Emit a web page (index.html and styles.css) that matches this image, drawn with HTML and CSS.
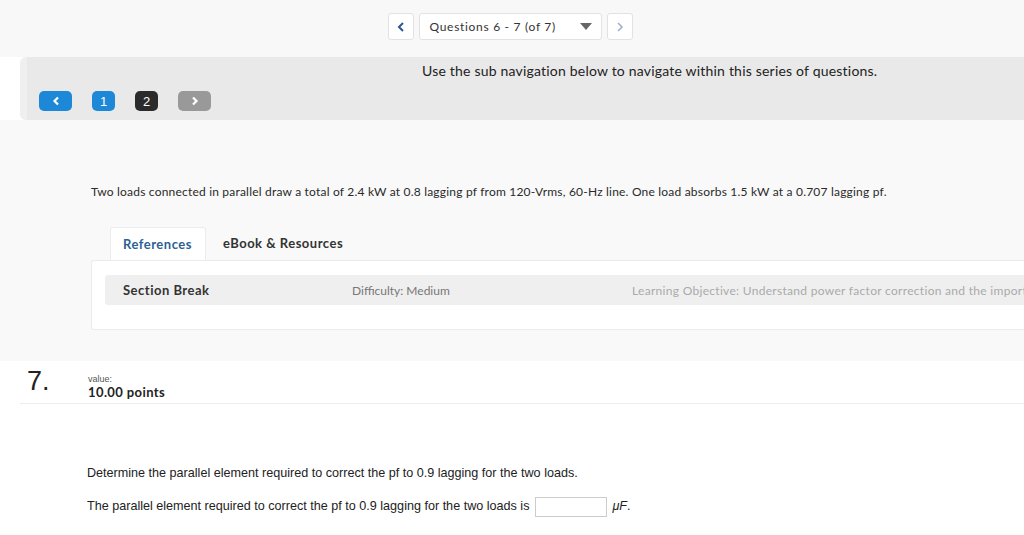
FILE: index.html
```html
<!DOCTYPE html>
<html lang="en">
<head>
  <meta charset="UTF-8" />
  <meta name="viewport" content="width=device-width, initial-scale=1" />
  <title>Questions 6 - 7 (of 7)</title>
  <link rel="stylesheet" href="styles.css">
</head>
<body>
  <header class="topbar">
    <button class="nav-btn">
      <svg width="8" height="10" viewBox="0 0 8 10"><path d="M6 1 L2 5 L6 9" fill="none" stroke="#2a5a94" stroke-width="2"/></svg>
    </button>
    <div class="picker">
      <span>Questions 6 - 7 (of 7)</span>
      <svg width="12" height="7" viewBox="0 0 12 7"><path d="M0 0 H12 L6 7 Z" fill="#666"/></svg>
    </div>
    <button class="nav-btn">
      <svg width="8" height="10" viewBox="0 0 8 10"><path d="M2 1 L6 5 L2 9" fill="none" stroke="#9bb3cf" stroke-width="1.6"/></svg>
    </button>
  </header>

  <section class="subnav">
    <div class="subnav-edge"></div>
    <div class="subnav-body">
      <p class="subnav-note">Use the sub navigation below to navigate within this series of questions.</p>
      <div class="pager">
        <span class="pg pg-arrow pg-blue">
          <svg width="8" height="10" viewBox="0 0 8 10"><path d="M6 1.5 L2.5 5 L6 8.5" fill="none" stroke="#fff" stroke-width="2.2"/></svg>
        </span>
        <span class="pg pg-blue">1</span>
        <span class="pg pg-dark">2</span>
        <span class="pg pg-arrow pg-gray">
          <svg width="8" height="10" viewBox="0 0 8 10"><path d="M2 1.5 L5.5 5 L2 8.5" fill="none" stroke="#fff" stroke-width="2.2"/></svg>
        </span>
      </div>
    </div>
  </section>

  <section class="stem">
    <p class="stem-text">Two loads connected in parallel draw a total of 2.4 kW at 0.8 lagging pf from 120-Vrms, 60-Hz line. One load absorbs 1.5 kW at a 0.707 lagging pf.</p>
    <div class="tabs">
      <span class="tab tab-active">References</span>
      <span class="tab">eBook &amp; Resources</span>
    </div>
    <div class="panel">
      <div class="meta-row">
        <span class="meta-title">Section Break</span>
        <span class="meta-diff">Difficulty: Medium</span>
        <span class="meta-obj">Learning Objective: Understand power factor correction and the importance of power factor.</span>
      </div>
    </div>
  </section>

  <section class="item">
    <div class="item-head">
      <span class="item-num">7.</span>
      <div class="item-value">
        <span class="value-label">value:</span>
        <span class="value-points">10.00 points</span>
      </div>
    </div>
    <div class="item-body">
      <p>Determine the parallel element required to correct the pf to 0.9 lagging for the two loads.</p>
      <p>The parallel element required to correct the pf to 0.9 lagging for the two loads is <input class="answer" type="text"> <i>μF</i>.</p>
    </div>
  </section>
</body>
</html>
```

FILE: styles.css
```css
body { margin: 0; background: #fff; color: #222; font-family: Lato, "Open Sans", sans-serif; overflow: hidden; }
p { margin: 0; }

.topbar { height: 57px; background: #f8f8f8; display: flex; justify-content: center; align-items: flex-start; gap: 5px; padding-top: 13px; padding-right: 4px; box-sizing: border-box; }
.nav-btn { width: 26px; height: 27px; padding: 0; background: #fff; border: 1px solid #e2e2e2; border-radius: 3px; display: flex; align-items: center; justify-content: center; }
.picker { width: 183px; height: 27px; box-sizing: border-box; background: #fff; border: 1px solid #e2e2e2; border-radius: 3px; display: flex; align-items: center; justify-content: space-between; padding: 0 9px 0 10px; font-size: 12px; color: #333; letter-spacing: 0.7px; }

.subnav { display: flex; height: 63px; padding-left: 20px; }
.subnav-edge { width: 7px; background: #efefef; border-top-left-radius: 6px; border-bottom-left-radius: 6px; }
.subnav-body { flex: 1; background: #e9e9e9; }
.subnav-note { padding: 5px 0 0 395px; font-size: 14px; letter-spacing: 0.2px; color: #222; }
.pager { display: flex; gap: 20px; padding: 12px 0 0 12px; }
.pg { height: 20px; min-width: 23px; border-radius: 5px; display: flex; align-items: center; justify-content: center; color: #fff; font-size: 13px; font-family: "Liberation Sans", Arial, sans-serif; }
.pg-arrow { width: 33px; }
.pg-blue { background: #1e88d8; }
.pg-dark { background: #2b2b2b; }
.pg-gray { background: #999; }

.stem { background: #f9f9f9; padding: 64px 0 31px 91px; }
.stem-text { font-size: 12px; letter-spacing: 0.2px; color: #2a2a2a; }
.tabs { display: flex; margin: 28px 0 0 19px; }
.tab { height: 32px; display: flex; align-items: center; padding: 0 14px 0 17px; font-size: 13px; font-weight: bold; letter-spacing: 0.5px; color: #333; }
.tab-active { background: #fff; color: #2e5f94; border: 1px solid #ececec; border-bottom: 0; border-radius: 3px 3px 0 0; padding: 0 13px 0 12px; }
.panel { background: #fff; border: 1px solid #ebebeb; border-right: 0; border-radius: 3px 0 0 3px; padding: 14px 0 24px 13px; }
.meta-row { display: flex; align-items: center; height: 30px; background: #efefef; border-radius: 3px 0 0 3px; font-size: 12px; white-space: nowrap; overflow: hidden; }
.meta-title { flex-shrink: 0; width: 229px; padding-left: 18px; font-size: 13px; font-weight: bold; letter-spacing: 0.5px; color: #333; }
.meta-diff { flex-shrink: 0; width: 280px; color: #777; }
.meta-obj { flex: 1; min-width: 0; overflow: hidden; color: #aaa; letter-spacing: 0.3px; }

.item { background: #fff; }
.item-head { display: flex; align-items: flex-end; margin-left: 20px; height: 42px; border-bottom: 1px solid #eee; }
.item-num { width: 61px; padding-left: 7px; font-size: 27px; line-height: 30px; align-self: center; margin-top: -2px; color: #222; font-family: "Liberation Sans", Arial, sans-serif; }
.item-value { display: flex; flex-direction: column; padding-bottom: 3px; }
.value-label { font-size: 9px; color: #555; font-family: "Liberation Sans", Arial, sans-serif; }
.value-points { font-size: 13px; font-weight: bold; letter-spacing: 0.4px; color: #222; }
.item-body { padding: 62px 0 0 87px; font-family: "Liberation Sans", Arial, sans-serif; font-size: 12.6px; color: #222; }
.item-body p { margin-bottom: 17px; }
.answer { width: 72px; height: 20px; box-sizing: border-box; border: 1px solid #ccc; vertical-align: middle; margin: 0 2px; }
```
